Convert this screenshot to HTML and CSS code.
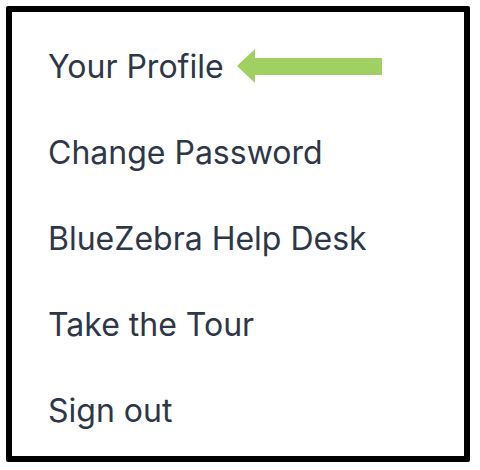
FILE: index.html
```html
<!DOCTYPE html>
<html>
<head>
<meta charset="utf-8">
<link rel="stylesheet" href="styles.css">
</head>
<body>
<div class="frame">
  <ul class="menu">
    <li class="item">
      <span class="label">Your Profile</span>
      <svg class="arrow" width="146" height="36" viewBox="0 0 146 36" aria-hidden="true">
        <polygon points="0,17 18,0 18,9 145,9 145,26 18,26 18,34" fill="#a0cf62"/>
      </svg>
    </li>
    <li class="item"><span class="label">Change Password</span></li>
    <li class="item"><span class="label">BlueZebra Help Desk</span></li>
    <li class="item"><span class="label">Take the Tour</span></li>
    <li class="item"><span class="label">Sign out</span></li>
  </ul>
</div>
</body>
</html>
```

FILE: styles.css
```css
html, body {
  margin: 0;
  padding: 0;
  background: #ffffff;
}
body {
  padding: 6px 0 0 6px;
  font-family: Inter, "Liberation Sans", sans-serif;
}
.frame {
  box-sizing: border-box;
  width: 464px;
  height: 456px;
  border: 6px solid #000000;
  border-radius: 2px;
  background: #fff;
  padding: 12px 0 0 36px;
}
.menu {
  list-style: none;
  margin: 0;
  padding: 0;
  display: flex;
  flex-direction: column;
}
.item {
  display: flex;
  align-items: center;
  height: 86px;
}
.label {
  font-size: 32px;
  line-height: 46px;
  color: #2d3748;
  white-space: nowrap;
}
.arrow {
  margin-left: 13px;
  display: block;
}
```
